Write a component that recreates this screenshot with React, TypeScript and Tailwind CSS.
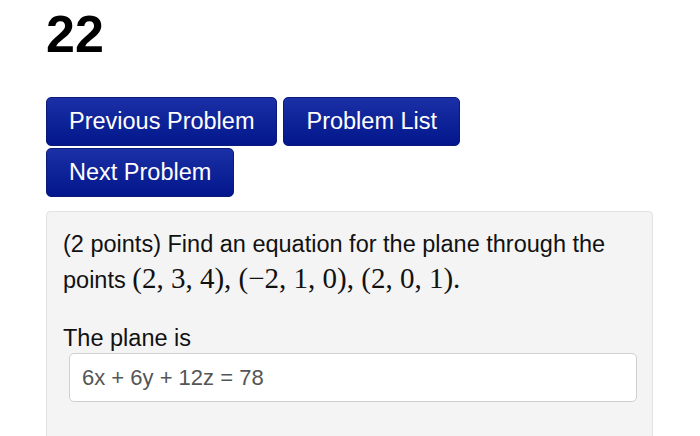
export default function App() {
  const btn =
    "h-[49px] px-[22px] rounded-[5px] border border-[#0a1a7a] bg-gradient-to-b from-[#1b2fa6] to-[#04168c] text-white text-[23.5px] leading-none flex items-center";
  const math = "font-['Liberation_Serif',serif] text-[29px]";

  return (
    <div className="w-[700px] h-[436px] overflow-hidden bg-white font-['Liberation_Sans',Arial,sans-serif] text-black">
      <div className="pl-[46px] pt-[8px]">
        <h1 className="text-[52px] font-bold leading-[52px]">22</h1>

        {/* Navigation */}
        <div className="mt-[37px] flex flex-wrap gap-x-[6px] gap-y-[2px] w-[430px]">
          <button className={btn}>Previous Problem</button>
          <button className={btn}>Problem List</button>
          <button className={btn}>Next Problem</button>
        </div>

        {/* Problem */}
        <div className="mt-[14px] w-[607px] h-[240px] bg-[#f4f4f4] border border-[#e2e2e2] rounded-[4px] px-[16px] pt-[15px]">
          <p className="text-[23.5px] leading-[34px] text-[#111]">
            (2 points) Find an equation for the plane through the
            <br />
            points <span className={math}>(2, 3, 4), (−2, 1, 0), (2, 0, 1).</span>
          </p>
          <p className="mt-[28px] text-[23.5px] leading-[26px] text-[#111]">The plane is</p>
          <div className="mt-[2px] ml-[6px] w-[568px] h-[49px] bg-white border border-[#cfcfcf] rounded-[5px] flex items-center px-[12px] text-[22px] text-[#555]">
            6x + 6y + 12z = 78
          </div>
        </div>
      </div>
    </div>
  );
}
